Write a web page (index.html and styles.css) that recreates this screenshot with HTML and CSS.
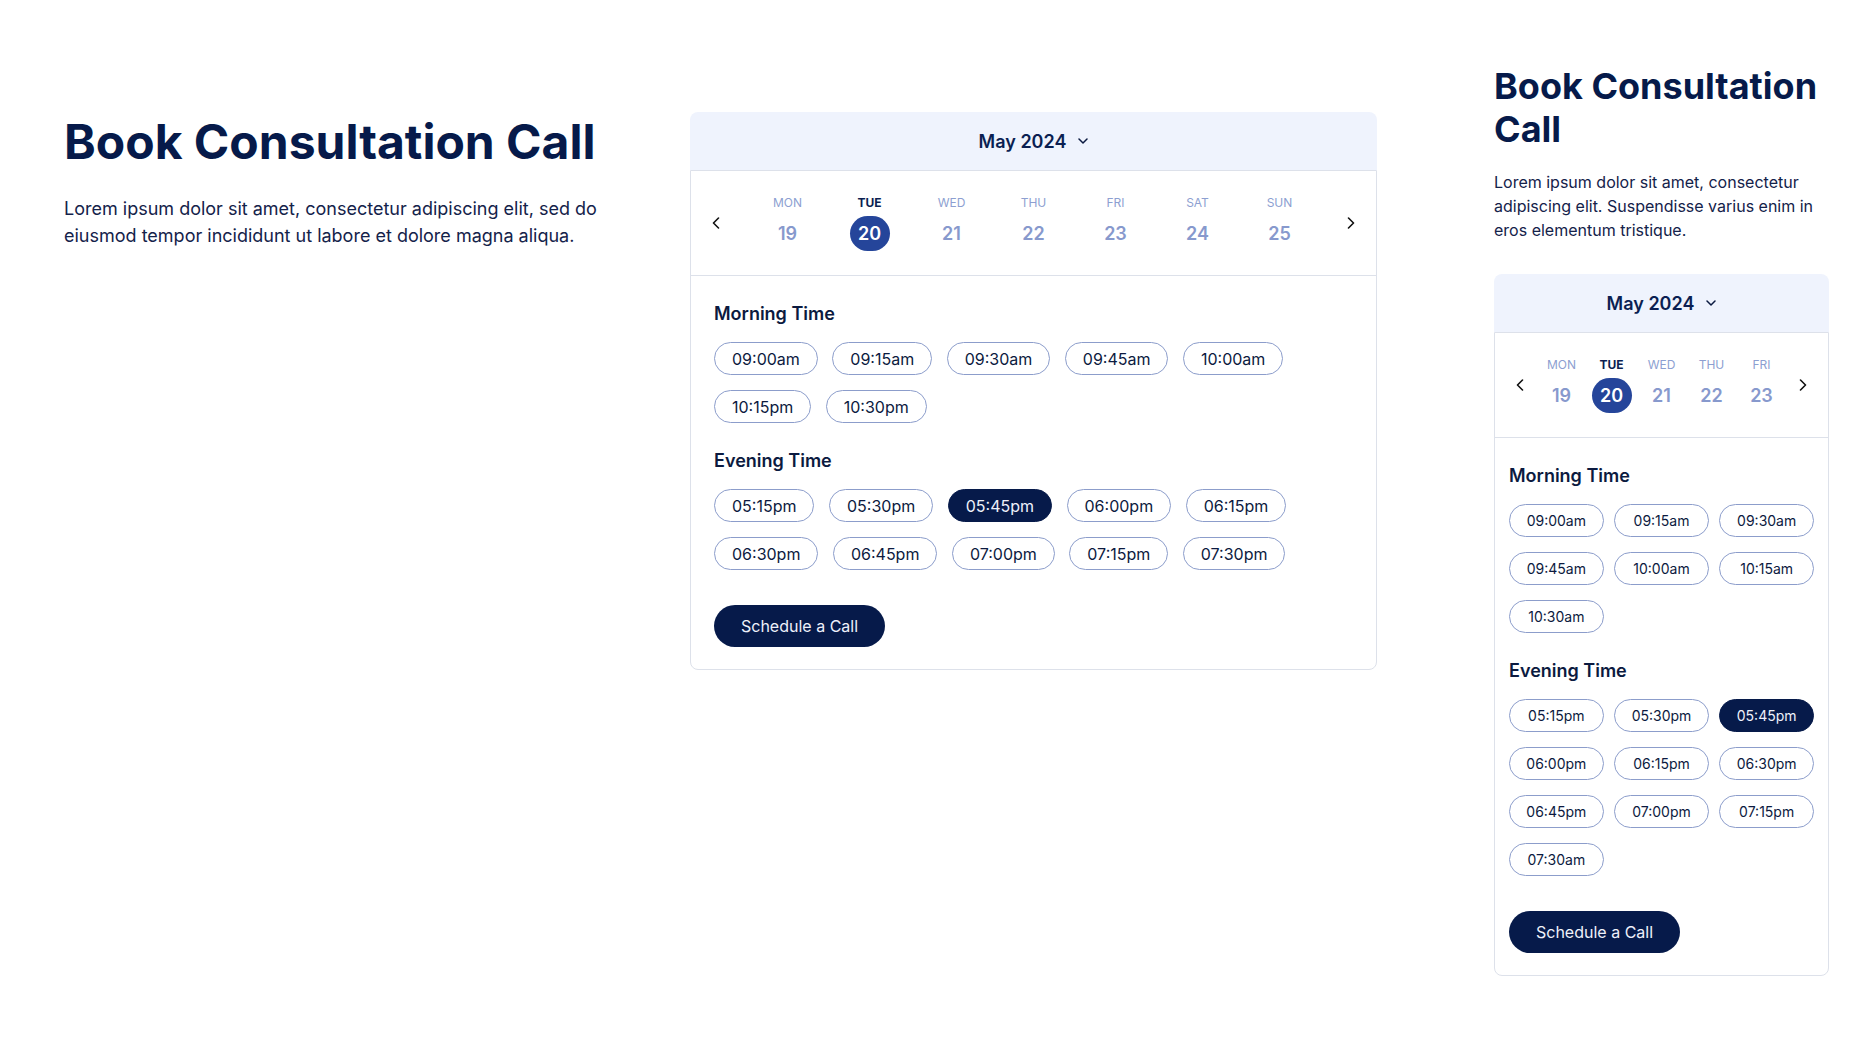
FILE: index.html
```html
<!DOCTYPE html>
<html lang="en">
<head>
<meta charset="utf-8">
<title>Book Consultation Call</title>
<link rel="stylesheet" href="styles.css">
</head>
<body>
<div class="page">
  <section class="desktop">
    <div class="intro">
      <h1 class="title">Book Consultation Call</h1>
      <p class="lead">Lorem ipsum dolor sit amet, consectetur adipiscing elit, sed do eiusmod tempor incididunt ut labore et dolore magna aliqua.</p>
    </div>
    <div class="card">
      <div class="cal-head">
        <span>May 2024</span>
        <svg class="caret" width="10" height="6" viewBox="0 0 10 6"><path d="M1 1l4 4 4-4" fill="none" stroke="#0b1a40" stroke-width="1.5" stroke-linecap="round" stroke-linejoin="round"/></svg>
      </div>
      <div class="cal-body">
        <div class="week">
          <svg class="nav" width="8" height="12" viewBox="0 0 8 12"><path d="M6.5 1L1.5 6l5 5" fill="none" stroke="#111" stroke-width="1.6" stroke-linecap="round" stroke-linejoin="round"/></svg>
          <div class="days">
            <div class="day"><span class="dname">MON</span><span class="dnum">19</span></div>
            <div class="day is-active"><span class="dname">TUE</span><span class="dnum">20</span></div>
            <div class="day"><span class="dname">WED</span><span class="dnum">21</span></div>
            <div class="day"><span class="dname">THU</span><span class="dnum">22</span></div>
            <div class="day"><span class="dname">FRI</span><span class="dnum">23</span></div>
            <div class="day"><span class="dname">SAT</span><span class="dnum">24</span></div>
            <div class="day"><span class="dname">SUN</span><span class="dnum">25</span></div>
          </div>
          <svg class="nav" width="8" height="12" viewBox="0 0 8 12"><path d="M1.5 1l5 5-5 5" fill="none" stroke="#111" stroke-width="1.6" stroke-linecap="round" stroke-linejoin="round"/></svg>
        </div>
        <div class="slots">
          <div class="slot-group">
            <h3 class="slot-title">Morning Time</h3>
            <div class="pills">
              <span class="pill">09:00am</span>
              <span class="pill">09:15am</span>
              <span class="pill">09:30am</span>
              <span class="pill">09:45am</span>
              <span class="pill">10:00am</span>
              <span class="pill">10:15pm</span>
              <span class="pill">10:30pm</span>
            </div>
          </div>
          <div class="slot-group">
            <h3 class="slot-title">Evening Time</h3>
            <div class="pills">
              <span class="pill">05:15pm</span>
              <span class="pill">05:30pm</span>
              <span class="pill is-selected">05:45pm</span>
              <span class="pill">06:00pm</span>
              <span class="pill">06:15pm</span>
              <span class="pill">06:30pm</span>
              <span class="pill">06:45pm</span>
              <span class="pill">07:00pm</span>
              <span class="pill">07:15pm</span>
              <span class="pill">07:30pm</span>
            </div>
          </div>
          <span class="cta">Schedule a Call</span>
        </div>
      </div>
    </div>
  </section>

  <section class="mobile">
    <h1 class="title">Book Consultation Call</h1>
    <p class="lead">Lorem ipsum dolor sit amet, consectetur adipiscing elit. Suspendisse varius enim in eros elementum tristique.</p>
    <div class="card">
      <div class="cal-head">
        <span>May 2024</span>
        <svg class="caret" width="10" height="6" viewBox="0 0 10 6"><path d="M1 1l4 4 4-4" fill="none" stroke="#0b1a40" stroke-width="1.5" stroke-linecap="round" stroke-linejoin="round"/></svg>
      </div>
      <div class="cal-body">
        <div class="week">
          <svg class="nav" width="8" height="12" viewBox="0 0 8 12"><path d="M6.5 1L1.5 6l5 5" fill="none" stroke="#111" stroke-width="1.6" stroke-linecap="round" stroke-linejoin="round"/></svg>
          <div class="days">
            <div class="day"><span class="dname">MON</span><span class="dnum">19</span></div>
            <div class="day is-active"><span class="dname">TUE</span><span class="dnum">20</span></div>
            <div class="day"><span class="dname">WED</span><span class="dnum">21</span></div>
            <div class="day"><span class="dname">THU</span><span class="dnum">22</span></div>
            <div class="day"><span class="dname">FRI</span><span class="dnum">23</span></div>
          </div>
          <svg class="nav" width="8" height="12" viewBox="0 0 8 12"><path d="M1.5 1l5 5-5 5" fill="none" stroke="#111" stroke-width="1.6" stroke-linecap="round" stroke-linejoin="round"/></svg>
        </div>
        <div class="slots">
          <div class="slot-group">
            <h3 class="slot-title">Morning Time</h3>
            <div class="pills">
              <span class="pill">09:00am</span>
              <span class="pill">09:15am</span>
              <span class="pill">09:30am</span>
              <span class="pill">09:45am</span>
              <span class="pill">10:00am</span>
              <span class="pill">10:15am</span>
              <span class="pill">10:30am</span>
            </div>
          </div>
          <div class="slot-group">
            <h3 class="slot-title">Evening Time</h3>
            <div class="pills">
              <span class="pill">05:15pm</span>
              <span class="pill">05:30pm</span>
              <span class="pill is-selected">05:45pm</span>
              <span class="pill">06:00pm</span>
              <span class="pill">06:15pm</span>
              <span class="pill">06:30pm</span>
              <span class="pill">06:45pm</span>
              <span class="pill">07:00pm</span>
              <span class="pill">07:15pm</span>
              <span class="pill">07:30am</span>
            </div>
          </div>
          <span class="cta">Schedule a Call</span>
        </div>
      </div>
    </div>
  </section>
</div>
</body>
</html>
```

FILE: styles.css
```css
* {
  box-sizing: border-box;
  margin: 0;
  padding: 0;
}

body {
  margin: 0;
  background: #ffffff;
  font-family: Inter, "Noto Sans", "Liberation Sans", sans-serif;
  color: #0c1a40;
}

.page {
  display: flex;
  width: 1849px;
  align-items: flex-start;
}

/* ---------- desktop frame ---------- */
.desktop {
  flex: 0 0 1440px;
  display: flex;
  align-items: flex-start;
  gap: 66px;
  padding: 112px 63px 0 64px;
}

.intro {
  flex: 0 0 560px;
  padding-top: 1px;
}

.title {
  font-size: 48px;
  font-weight: 700;
  line-height: 1.2;
  color: #061a4a;
}

.lead {
  margin-top: 24px;
  max-width: 545px;
  font-size: 18px;
  line-height: 27px;
  color: #14224a;
}

.desktop .card {
  flex: 1;
}

/* ---------- mobile frame ---------- */
.mobile {
  flex: 0 0 375px;
  margin-left: 34px;
  padding: 65px 20px 0;
}

.mobile .title {
  font-size: 36px;
}

.mobile .lead {
  margin-top: 19px;
  font-size: 16px;
  line-height: 24px;
}

.mobile .card {
  margin-top: 32px;
}

/* ---------- calendar card ---------- */
.cal-head {
  height: 58px;
  background: #eff3fd;
  border-radius: 8px 8px 0 0;
  display: flex;
  align-items: center;
  justify-content: center;
  gap: 12px;
  font-size: 18px;
  font-weight: 600;
  color: #0b1f52;
}

.cal-body {
  border: 1px solid #dde1ea;
  border-radius: 0 0 8px 8px;
}

.week {
  display: flex;
  align-items: center;
  padding: 24px 21px 24px;
  border-bottom: 1px solid #dde1ea;
}

.nav {
  flex: 0 0 auto;
  display: block;
}

.days {
  flex: 1;
  display: flex;
  justify-content: center;
  gap: 42px;
}

.mobile .days {
  gap: 10px;
}

.day {
  width: 40px;
  display: flex;
  flex-direction: column;
  align-items: center;
  gap: 5px;
}

.dname {
  font-size: 12px;
  line-height: 16px;
  color: #8d9fd1;
}

.dnum {
  width: 40px;
  height: 35px;
  border-radius: 18px;
  display: flex;
  align-items: center;
  justify-content: center;
  font-size: 18px;
  font-weight: 600;
  color: #8799cd;
}

.day.is-active .dname {
  color: #0b1f52;
  font-weight: 700;
}

.day.is-active .dnum {
  background: #25459a;
  color: #ffffff;
}

/* ---------- time slots ---------- */
.slots {
  padding: 24px 23px 22px;
}

.mobile .slots {
  padding: 24px 14px 22px;
}

.slot-group {
  margin-bottom: 24px;
}

.slot-group + .slot-group {
  margin-bottom: 35px;
}

.slot-title {
  font-size: 18px;
  font-weight: 600;
  line-height: 27px;
  margin-bottom: 15px;
  color: #0b1a40;
}

.pills {
  display: flex;
  flex-wrap: wrap;
  gap: 15px 14.5px;
}

.pill {
  height: 33px;
  padding: 0 17px;
  border: 1px solid #8c9dcb;
  border-radius: 17px;
  display: flex;
  align-items: center;
  justify-content: center;
  font-size: 16px;
  color: #0c1a40;
}

.pill.is-selected {
  background: #061a4a;
  border-color: #061a4a;
  color: #eef1fa;
}

.mobile .pills {
  display: grid;
  grid-template-columns: repeat(3, 1fr);
  gap: 15px 10.5px;
}

.mobile .pill {
  padding: 0;
  font-size: 14px;
}

.cta {
  display: inline-flex;
  align-items: center;
  height: 42px;
  padding: 0 27px;
  border-radius: 21px;
  background: #061a4a;
  color: #eef1fa;
  font-size: 16px;
}
```
